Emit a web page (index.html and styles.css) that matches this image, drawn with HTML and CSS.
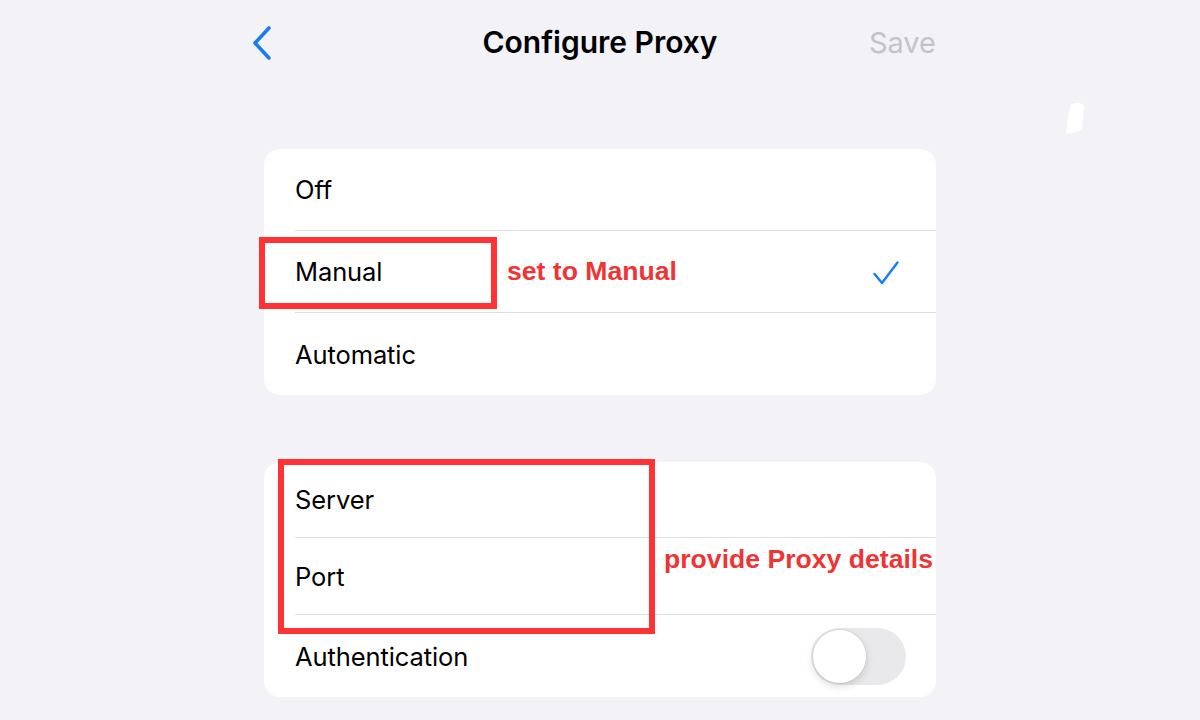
FILE: index.html
```html
<!DOCTYPE html>
<html lang="en">
<head>
    <meta charset="UTF-8">
    <meta name="viewport" content="width=device-width, initial-scale=1.0">
    <title>Configure Proxy</title>
    <link rel="stylesheet" href="styles.css">
</head>
<body>
    <div class="screen">
        <header class="nav">
            <a class="nav-back" href="#" aria-label="Back">
                <svg width="22" height="36" viewBox="0 0 22 36">
                    <path d="M18 3 L4 18 L18 33" fill="none" stroke="#1a7cf5" stroke-width="3.6" stroke-linecap="round" stroke-linejoin="round"/>
                </svg>
            </a>
            <h1 class="nav-title">Configure Proxy</h1>
            <span class="nav-save">Save</span>
        </header>

        <section class="group">
            <div class="row"><span class="row-label">Off</span></div>
            <div class="row">
                <span class="row-label">Manual</span>
                <svg class="check" width="28" height="26" viewBox="0 0 28 26">
                    <path d="M2.5 14 L10 23 L25.5 2.5" fill="none" stroke="#1a7cf5" stroke-width="2.4" stroke-linecap="round" stroke-linejoin="round"/>
                </svg>
            </div>
            <div class="row"><span class="row-label">Automatic</span></div>

            <div class="mark mark-mode"></div>
            <div class="note note-mode">set to Manual</div>
        </section>

        <section class="group group-details">
            <div class="row row-server"><span class="row-label">Server</span></div>
            <div class="row row-port"><span class="row-label">Port</span></div>
            <div class="row">
                <span class="row-label">Authentication</span>
                <span class="toggle"></span>
            </div>

            <div class="mark mark-details"></div>
            <div class="note note-details">provide Proxy details</div>
        </section>
    </div>

    <svg class="glint" width="22" height="34" viewBox="0 0 22 34">
        <path d="M6 4 Q8 1 13 1 Q19 1 20 4 L18 26 Q17 29 12 30 Q6 31 3 32 Q1 32 2 29 Z" fill="#ffffff"/>
    </svg>
</body>
</html>
```

FILE: styles.css
```css
body {
    margin: 0;
    background: #f2f2f7;
    font-family: Inter, "Noto Sans", sans-serif;
    color: #000;
    position: relative;
    min-height: 720px;
    overflow: hidden;
}
.screen {
    width: 672px;
    margin: 0 auto;
}

/* top bar */
.nav {
    height: 84px;
    display: grid;
    grid-template-columns: 1fr auto 1fr;
    align-items: center;
}
.nav-back {
    display: flex;
    margin-left: -13px;
    margin-top: 1px;
}
.nav-title {
    margin: 0;
    font-size: 30px;
    font-weight: 600;
    letter-spacing: 0;
}
.nav-save {
    justify-self: end;
    font-size: 29px;
    color: #c4c4c8;
}

/* grouped list */
.group {
    position: relative;
    margin-top: 65px;
    background: #fff;
    border-radius: 16px;
}
.group-details {
    margin-top: 67px;
}
.row {
    box-sizing: border-box;
    height: 82px;
    margin-left: 31px;
    padding-right: 36px;
    display: flex;
    align-items: center;
    justify-content: space-between;
    border-bottom: 1px solid #dedee2;
}
.row:nth-last-child(3) {
    border-bottom: none;
}
.row-server {
    height: 76px;
}
.row-port {
    height: 77px;
}
.row-label {
    font-size: 25.5px;
    letter-spacing: -0.1px;
}
.check {
    margin-top: 2px;
}

/* switch */
.toggle {
    position: relative;
    width: 95px;
    height: 57px;
    margin-right: -6px;
    border-radius: 29px;
    background: #e9e9eb;
}
.toggle::after {
    content: "";
    position: absolute;
    left: 2px;
    top: 2px;
    width: 53px;
    height: 53px;
    border-radius: 50%;
    background: #fff;
    box-shadow: 0 3px 8px rgba(0,0,0,0.15), 0 0 0 1px rgba(0,0,0,0.04);
}

/* red call-outs drawn over the list */
.mark {
    position: absolute;
    border: 6px solid #ff3333;
    box-sizing: border-box;
}
.mark-mode {
    left: -5px;
    top: 88px;
    width: 238px;
    height: 72px;
}
.mark-details {
    left: 14px;
    top: -3px;
    width: 377px;
    height: 175px;
}
.note {
    position: absolute;
    font-family: "Liberation Sans", Arial, sans-serif;
    font-weight: bold;
    font-size: 26.6px;
    color: #ee3434;
    white-space: nowrap;
}
.note-mode {
    left: 243px;
    top: 107px;
}
.note-details {
    left: 400px;
    top: 82px;
}

.glint {
    position: absolute;
    left: 1064px;
    top: 102px;
}
```
